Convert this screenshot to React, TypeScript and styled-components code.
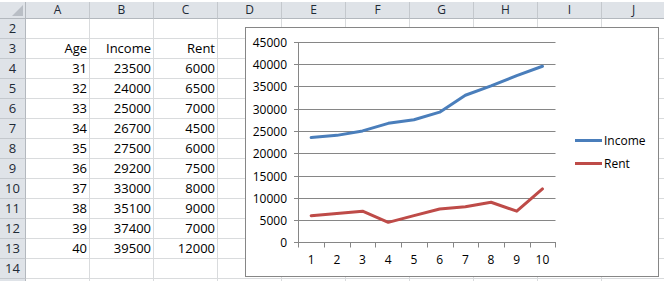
import React from "react";
import styled, { createGlobalStyle } from "styled-components";

const GlobalStyle = createGlobalStyle`
  html, body { margin: 0; padding: 0; background: #ffffff; overflow: hidden; }
  body { font-family: "Open Sans", "Liberation Sans", sans-serif; }
`;

const COLS = ["A", "B", "C", "D", "E", "F", "G", "H", "I", "J"];
const ROWS: Record<number, string[]> = {
  3: ["Age", "Income", "Rent"],
};
const AGE = [31, 32, 33, 34, 35, 36, 37, 38, 39, 40];
const INCOME = [23500, 24000, 25000, 26700, 27500, 29200, 33000, 35100, 37400, 39500];
const RENT = [6000, 6500, 7000, 4500, 6000, 7500, 8000, 9000, 7000, 12000];
AGE.forEach((a, i) => {
  ROWS[4 + i] = [String(a), String(INCOME[i]), String(RENT[i])];
});

const Sheet = styled.div`
  position: relative;
  padding-top: 2px;
  width: 664px;
  height: 281px;
  overflow: hidden;
  box-sizing: border-box;
`;

const Grid = styled.div`
  display: grid;
  grid-template-columns: 26px repeat(10, 64px);
  grid-template-rows: 17px;
  grid-auto-rows: 20px;
`;

const HeaderBase = styled.div`
  box-sizing: border-box;
  background: #dfe3e8;
  color: #1e2a36;
  text-align: center;
  white-space: nowrap;
`;

const Corner = styled(HeaderBase)`
  position: relative;
  border-right: 1px solid #b3b8be;
  border-bottom: 1px solid #b3b8be;
  &::after {
    content: "";
    position: absolute;
    right: 2px;
    bottom: 2px;
    width: 11px;
    height: 11px;
    background: #b9bec5;
    clip-path: polygon(100% 0, 100% 100%, 0 100%);
  }
`;

const ColHeader = styled(HeaderBase)`
  border-right: 1px solid #c4c8cd;
  border-bottom: 1px solid #b3b8be;
  font-size: 12px;
  line-height: 15px;
`;

const RowHeader = styled(HeaderBase)`
  border-right: 1px solid #b3b8be;
  border-bottom: 1px solid #c4c8cd;
  font-size: 13px;
  line-height: 19px;
`;

const Cell = styled.div`
  box-sizing: border-box;
  border-right: 1px solid #d9dbdd;
  border-bottom: 1px solid #d9dbdd;
  font-size: 13px;
  line-height: 19px;
  padding: 0 2px;
  text-align: right;
  color: #000;
  white-space: nowrap;
  overflow: hidden;
`;

const ChartBox = styled.div`
  position: absolute;
  left: 245px;
  top: 27px;
  width: 414px;
  height: 250px;
  box-sizing: border-box;
  border: 1px solid #868686;
  background: #ffffff;
  display: flex;
`;

const Plot = styled.svg`
  flex: none;
  display: block;
`;

const Legend = styled.div`
  display: flex;
  flex-direction: column;
  justify-content: center;
`;

const LegendItem = styled.div`
  display: flex;
  align-items: center;
  height: 23px;
  font-size: 12px;
  color: #000;
`;

const Swatch = styled.span<{ $color: string }>`
  display: block;
  width: 27px;
  height: 3px;
  background: ${(p) => p.$color};
  margin-right: 2px;
`;

const BLUE = "#4A7EBB";
const RED = "#BE4B48";

const X0 = 52.3;
const CAT = 25.7;
const yOf = (v: number) => 214.4 - (v * 22.3) / 5000;
const xOf = (i: number) => X0 + CAT * (i + 0.5);
const pts = (data: number[]) => data.map((v, i) => `${xOf(i).toFixed(2)},${yOf(v).toFixed(2)}`).join(" ");

const GRID_STEPS = [0, 1, 2, 3, 4, 5, 6, 7, 8, 9];

function Chart() {
  return (
    <ChartBox>
      <Plot width={329} height={248} viewBox="0 0 329 248">
        {GRID_STEPS.map((k) => {
          const y = Math.round(yOf(k * 5000)) + 0.5;
          return (
            <g key={k}>
              <line x1={48} x2={309.5} y1={y} y2={y} stroke="#868686" strokeWidth={1} />
              <text
                x={41}
                y={y + 4}
                textAnchor="end"
                fontSize={12}
                fontFamily='"Open Sans", sans-serif'
                fill="#000"
              >
                {k * 5000}
              </text>
            </g>
          );
        })}
        <line x1={52.5} x2={52.5} y1={Math.round(yOf(45000)) + 0.5} y2={Math.round(yOf(0)) + 0.5} stroke="#868686" strokeWidth={1} />
        {Array.from({ length: 11 }, (_, k) => {
          const x = Math.round(X0 + CAT * k) + 0.5;
          return <line key={k} x1={x} x2={x} y1={214} y2={219.5} stroke="#868686" strokeWidth={1} />;
        })}
        {Array.from({ length: 10 }, (_, i) => (
          <text
            key={i}
            x={xOf(i)}
            y={236.3}
            textAnchor="middle"
            fontSize={12}
            fontFamily='"Open Sans", sans-serif'
            fill="#000"
          >
            {i + 1}
          </text>
        ))}
        <polyline points={pts(INCOME)} fill="none" stroke={BLUE} strokeWidth={3} strokeLinejoin="round" strokeLinecap="round" />
        <polyline points={pts(RENT)} fill="none" stroke={RED} strokeWidth={3} strokeLinejoin="round" strokeLinecap="round" />
      </Plot>
      <Legend>
        <LegendItem>
          <Swatch $color={BLUE} />
          Income
        </LegendItem>
        <LegendItem>
          <Swatch $color={RED} />
          Rent
        </LegendItem>
      </Legend>
    </ChartBox>
  );
}

export default function App() {
  const rowNums = Array.from({ length: 14 }, (_, i) => i + 2);
  return (
    <>
      <GlobalStyle />
      <Sheet>
        <Grid>
          <Corner />
          {COLS.map((c) => (
            <ColHeader key={c}>{c}</ColHeader>
          ))}
          {rowNums.map((r) => (
            <React.Fragment key={r}>
              <RowHeader>{r < 15 ? r : ""}</RowHeader>
              {COLS.map((c, ci) => (
                <Cell key={c}>{ROWS[r] && ci < 3 ? ROWS[r][ci] : ""}</Cell>
              ))}
            </React.Fragment>
          ))}
        </Grid>
        <Chart />
      </Sheet>
    </>
  );
}
